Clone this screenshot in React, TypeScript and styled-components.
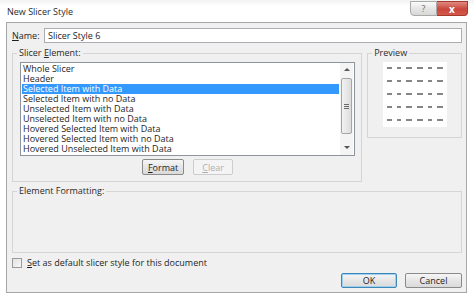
import React from "react";
import styled, { createGlobalStyle } from "styled-components";

const GlobalStyle = createGlobalStyle`
  html, body {
    margin: 0;
    padding: 0;
    background: #ffffff;
  }
  * {
    box-sizing: border-box;
  }
`;

const FONT = `"Open Sans", "Noto Sans", "Liberation Sans", sans-serif`;

const Window = styled.div`
  width: 474px;
  height: 301px;
  background: #ffffff;
  font-family: ${FONT};
  font-size: 9px;
  color: #1e1e1e;
  overflow: hidden;
`;

const TitleBar = styled.div`
  height: 22px;
  display: flex;
  align-items: flex-start;
  justify-content: space-between;
  background: linear-gradient(#f2f2f2, #ffffff 6px);
`;

const Title = styled.span`
  padding: 5px 0 0 7px;
  font-size: 9px;
  color: #2a2a2a;
`;

const Caption = styled.div`
  display: flex;
  margin: 1px 6px 0 0;
`;

const HelpButton = styled.div`
  height: 15px;
  width: 27px;
  display: flex;
  align-items: center;
  justify-content: center;
  font-size: 9px;
  color: #6b6b6b;
  border: 1px solid #a9a9a9;
  border-radius: 0 0 0 4px;
  background: linear-gradient(#fafafa, #e4e4e4 55%, #d8d8d8);
`;

const CloseButton = styled.div`
  height: 15px;
  width: 31px;
  display: flex;
  align-items: center;
  justify-content: center;
  font-size: 10px;
  font-weight: 700;
  color: #ffffff;
  border: 1px solid #a8392f;
  border-left: none;
  border-radius: 0 0 4px 0;
  background-color: #c94a3f;
  background-image: linear-gradient(#e08a80, #c9473c 55%, #d4594b);
`;

const Client = styled.div`
  margin-left: 6px;
  width: 461px;
  height: 271px;
  border: 1px solid #a6a6a6;
  background: #f0f0f0;
  padding: 5px 4px 4px 5px;
  display: flex;
  flex-direction: column;
`;

const NameRow = styled.div`
  height: 15px;
  display: flex;
  align-items: center;
`;

const Label = styled.span`
  width: 32px;
  white-space: nowrap;
`;

const TextInput = styled.div`
  flex: 1;
  height: 15px;
  border: 1px solid #abadb3;
  background: #ffffff;
  padding-left: 3px;
  line-height: 13px;
`;

const MiddleRow = styled.div`
  margin-top: 4px;
  display: flex;
  gap: 5px;
`;

const Group = styled.fieldset<{ $w?: number; $h: number }>`
  margin: 0;
  padding: 0;
  width: ${(p) => (p.$w ? `${p.$w}px` : "auto")};
  height: ${(p) => p.$h}px;
  border: 1px solid #d5d5d5;
  min-width: 0;
`;

const Legend = styled.legend`
  padding: 0 2px;
  margin-left: 4px;
  height: 12px;
  line-height: 12px;
  color: #2a2a2a;
`;

const ElementBody = styled.div`
  display: flex;
  flex-direction: column;
  padding: 3px 6px 0 7px;
`;

const ListBox = styled.div`
  height: 94px;
  border: 1px solid #8f939a;
  background: #ffffff;
  display: flex;
  padding: 0 0 0 1px;
`;

const Items = styled.div`
  flex: 1;
  padding-top: 1px;
`;

const Item = styled.div<{ $selected?: boolean }>`
  height: 10px;
  line-height: 10px;
  padding-left: 1px;
  white-space: nowrap;
  background: ${(p) => (p.$selected ? "#3399ff" : "transparent")};
  color: ${(p) => (p.$selected ? "#ffffff" : "#1e1e1e")};
  margin-right: 1px;
`;

const ScrollBar = styled.div`
  width: 13px;
  margin-right: 1px;
  background: #f4f4f4;
  display: flex;
  flex-direction: column;
  align-items: center;
  padding-top: 5px;
`;

const Arrow = styled.div<{ $down?: boolean }>`
  width: 0;
  height: 0;
  border-left: 3px solid transparent;
  border-right: 3px solid transparent;
  ${(p) =>
    p.$down ? "border-top: 3px solid #555;" : "border-bottom: 3px solid #555;"}
`;

const Thumb = styled.div`
  margin: 7px 0 12px;
  width: 11px;
  height: 56px;
  border: 1px solid #a5a5a5;
  border-radius: 2px;
  background: linear-gradient(90deg, #f2f2f2, #dcdcdc);
  display: flex;
  flex-direction: column;
  align-items: center;
  justify-content: center;
  gap: 1px;
`;

const Grip = styled.div`
  width: 5px;
  height: 1px;
  background: #6b6b6b;
`;

const ButtonRow = styled.div<{ $end?: boolean }>`
  display: flex;
  justify-content: ${(p) => (p.$end ? "flex-end" : "center")};
  gap: ${(p) => (p.$end ? 8 : 9)}px;
  margin-top: ${(p) => (p.$end ? 5 : 3)}px;
`;

const Button = styled.div<{ $w: number; $h?: number; $default?: boolean; $disabled?: boolean }>`
  width: ${(p) => p.$w}px;
  height: ${(p) => p.$h ?? 15}px;
  display: flex;
  align-items: center;
  justify-content: center;
  border: 1px solid
    ${(p) => (p.$default ? "#3c86b8" : p.$disabled ? "#cdcdcd" : "#8a8a8a")};
  border-radius: 2px;
  color: ${(p) => (p.$disabled ? "#b0b0b0" : "#1e1e1e")};
  background: ${(p) =>
    p.$disabled
      ? "#f4f4f4"
      : "linear-gradient(#f6f6f6, #e6e6e6 50%, #dadada)"};
  box-shadow: ${(p) => (p.$default ? "inset 0 0 0 1px #9fd0ef" : "none")};
`;

const PreviewBody = styled.div`
  display: flex;
  justify-content: center;
  padding-top: 3px;
`;

const PreviewCanvas = styled.div`
  width: 64px;
  height: 65px;
  background: #ffffff;
  padding: 5px 0 0 4px;
  display: flex;
  flex-direction: column;
  gap: 11px;
`;

const DashRow = styled.div`
  display: flex;
  gap: 5px;
`;

const Dash = styled.span<{ $w: number }>`
  width: ${(p) => p.$w}px;
  height: 2px;
  background: #858585;
`;

const FormattingGap = styled.div`
  margin-top: 3px;
`;

const CheckRow = styled.div`
  margin-top: 4px;
  height: 11px;
  display: flex;
  align-items: center;
  gap: 5px;
`;

const CheckBox = styled.div`
  width: 10px;
  height: 10px;
  border: 1px solid #9a9a9a;
  background: linear-gradient(135deg, #e2e2e2, #f8f8f8);
`;

const items = [
  "Whole Slicer",
  "Header",
  "Selected Item with Data",
  "Selected Item with no Data",
  "Unselected Item with Data",
  "Unselected Item with no Data",
  "Hovered Selected Item with Data",
  "Hovered Selected Item with no Data",
  "Hovered Unselected Item with Data",
];

const dashWidths = [5, 4, 6, 6, 4, 6];

export default function App() {
  return (
    <>
      <GlobalStyle />
      <Window>
        <TitleBar>
          <Title>New Slicer Style</Title>
          <Caption>
            <HelpButton>?</HelpButton>
            <CloseButton>x</CloseButton>
          </Caption>
        </TitleBar>
        <Client>
          <NameRow>
            <Label>
              <u>N</u>ame:
            </Label>
            <TextInput>Slicer Style 6</TextInput>
          </NameRow>
          <MiddleRow>
            <Group $w={351} $h={135}>
              <Legend>
                Slicer <u>E</u>lement:
              </Legend>
              <ElementBody>
                <ListBox>
                  <Items>
                    {items.map((it, i) => (
                      <Item key={it} $selected={i === 2}>
                        {it}
                      </Item>
                    ))}
                  </Items>
                  <ScrollBar>
                    <Arrow />
                    <Thumb>
                      <Grip />
                      <Grip />
                      <Grip />
                    </Thumb>
                    <Arrow $down />
                  </ScrollBar>
                </ListBox>
                <ButtonRow>
                  <Button $w={42} $h={16}>
                    <u>F</u>ormat
                  </Button>
                  <Button $w={40} $h={16} $disabled>
                    <u>C</u>lear
                  </Button>
                </ButtonRow>
              </ElementBody>
            </Group>
            <Group $w={95} $h={91}>
              <Legend>Preview</Legend>
              <PreviewBody>
                <PreviewCanvas>
                  {[0, 1, 2, 3, 4].map((r) => (
                    <DashRow key={r}>
                      {dashWidths.map((w, i) => (
                        <Dash key={i} $w={w} />
                      ))}
                    </DashRow>
                  ))}
                </PreviewCanvas>
              </PreviewBody>
            </Group>
          </MiddleRow>
          <FormattingGap>
            <Group $h={68}>
              <Legend>Element Formatting:</Legend>
            </Group>
          </FormattingGap>
          <CheckRow>
            <CheckBox />
            <span>
              <u>S</u>et as default slicer style for this document
            </span>
          </CheckRow>
          <ButtonRow $end>
            <Button $w={56} $default>
              OK
            </Button>
            <Button $w={57}>Cancel</Button>
          </ButtonRow>
        </Client>
      </Window>
    </>
  );
}
